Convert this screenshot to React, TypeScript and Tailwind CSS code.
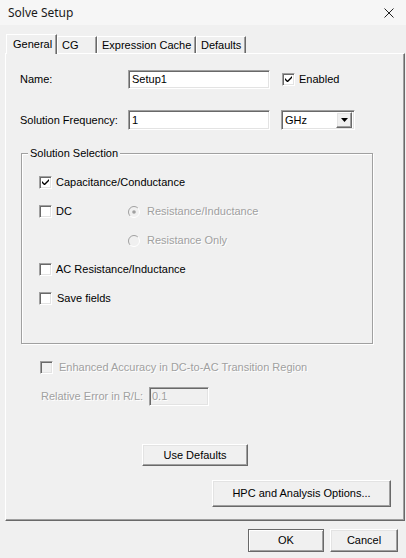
import type { ReactNode } from 'react'

const sunken =
  'border border-t-[#a0a0a0] border-l-[#a0a0a0] border-r-white border-b-white shadow-[inset_1px_1px_0_#696969,inset_-1px_-1px_0_#e3e3e3]'
const raised =
  'border border-t-white border-l-white border-r-[#696969] border-b-[#696969] shadow-[inset_-1px_-1px_0_#a0a0a0,inset_1px_1px_0_#e3e3e3] bg-[#f0f0f0]'
const dim = 'text-[#a0a0a0] [text-shadow:1px_1px_0_#fff]'

function Check({ checked = false, disabled = false }: { checked?: boolean; disabled?: boolean }) {
  return (
    <span className={`flex h-[13px] w-[13px] shrink-0 items-center justify-center ${sunken} ${disabled ? 'bg-[#f0f0f0]' : 'bg-white'}`}>
      {checked && (
        <svg width="7" height="7" viewBox="0 0 7 7">
          <path d="M0 2 L0 4 L2 6 L3 6 L7 2 L7 0 L2.5 4.5 Z" fill="#000" />
        </svg>
      )}
    </span>
  )
}

function Radio({ checked = false }: { checked?: boolean }) {
  return (
    <svg width="12" height="12" viewBox="0 0 12 12" className="shrink-0">
      <circle cx="6" cy="6" r="5.5" fill="#f0f0f0" />
      <path d="M2.1 9.9 A5.5 5.5 0 0 1 9.9 2.1" stroke="#a0a0a0" strokeWidth="1" fill="none" />
      <path d="M9.9 2.1 A5.5 5.5 0 0 1 2.1 9.9" stroke="#ffffff" strokeWidth="1" fill="none" />
      {checked && <circle cx="6" cy="6" r="1.8" fill="#a0a0a0" />}
    </svg>
  )
}

function Button({ children, className = '' }: { children: ReactNode; className?: string }) {
  return <div className={`flex shrink-0 items-center justify-center ${raised} ${className}`}>{children}</div>
}

function Row({ children, className = '' }: { children: ReactNode; className?: string }) {
  return <div className={`flex h-[17px] items-center whitespace-nowrap ${className}`}>{children}</div>
}

export default function App() {
  const tabs = [
    { label: 'CG', w: 'w-[40px]' },
    { label: 'Expression Cache', w: 'w-[99px]' },
    { label: 'Defaults', w: 'w-[50px]' },
  ]

  return (
    <div className="flex h-[558px] w-[406px] flex-col bg-[#f0f0f0] [font-family:'Liberation_Sans',Arial,sans-serif] text-[11px] leading-[13px] text-black">
      {/* title bar */}
      <div className="flex h-[25px] items-center justify-between bg-[#f6f6f6] pl-[8px] pr-[12px]">
        <span className="[font-family:'Noto_Sans',sans-serif] text-[12px] text-[#1a1a1a]">Solve Setup</span>
        <svg width="10" height="10" viewBox="0 0 10 10">
          <path d="M0.5 0.5 L9.5 9.5 M9.5 0.5 L0.5 9.5" stroke="#222" strokeWidth="1" />
        </svg>
      </div>

      {/* tab strip */}
      <div className="ml-[6px] mt-[9px] flex h-[19px] items-end whitespace-nowrap">
        <div className="relative z-10 -mb-px flex h-[20px] w-[51px] items-start border border-b-0 border-t-white border-l-white border-r-[#696969] bg-[#f0f0f0] pl-[6px] pt-[3px] shadow-[inset_-1px_0_0_#a0a0a0]">
          General
        </div>
        {tabs.map((t) => (
          <div
            key={t.label}
            className={`flex h-[17px] ${t.w} items-start border border-b-0 border-t-white border-l-white border-r-[#696969] pl-[4px] pt-[2px] shadow-[inset_-1px_0_0_#a0a0a0]`}
          >
            {t.label}
          </div>
        ))}
      </div>

      {/* tab panel */}
      <div className="ml-[5px] flex h-[468px] w-[400px] flex-col border border-t-white border-l-white border-r-[#696969] border-b-[#696969] pl-[14px] shadow-[inset_-1px_-1px_0_#a0a0a0]">
        <div className="mt-[16px] flex h-[19px] items-center">
          <span className="w-[108px]">Name:</span>
          <div className={`flex h-[19px] w-[142px] items-center bg-white pl-[3px] ${sunken}`}>Setup1</div>
          <span className="ml-[12px] mr-[4px]">
            <Check checked />
          </span>
          <span>Enabled</span>
        </div>

        <div className="mt-[21px] flex h-[20px] items-center">
          <span className="w-[108px] whitespace-nowrap">Solution Frequency:</span>
          <div className={`flex h-[20px] w-[142px] items-center bg-white pl-[3px] ${sunken}`}>1</div>
          <div className={`ml-[11px] flex h-[20px] w-[74px] items-center justify-between bg-white pl-[3px] pr-[2px] ${sunken}`}>
            <span>GHz</span>
            <div className={`flex h-[16px] w-[16px] items-center justify-center ${raised}`}>
              <svg width="7" height="4" viewBox="0 0 7 4">
                <path d="M0 0 L7 0 L3.5 4 Z" fill="#000" />
              </svg>
            </div>
          </div>
        </div>

        {/* group box */}
        <div className="relative ml-[1px] mt-[23px] flex h-[191px] w-[352px] flex-col border border-[#a0a0a0] pl-[17px] pt-[20px] shadow-[inset_1px_1px_0_#fff,1px_1px_0_#fff]">
          <span className="absolute -top-[7px] left-[6px] bg-[#f0f0f0] px-[2px]">Solution Selection</span>
          <div className="flex flex-col gap-[12px]">
            <Row>
              <Check checked />
              <span className="ml-[4px]">Capacitance/Conductance</span>
            </Row>
            <Row>
              <Check />
              <span className="ml-[4px] w-[72px]">DC</span>
              <Radio checked />
              <span className={`ml-[7px] ${dim}`}>Resistance/Inductance</span>
            </Row>
            <Row>
              <span className="w-[89px]" />
              <Radio />
              <span className={`ml-[7px] ${dim}`}>Resistance Only</span>
            </Row>
            <Row>
              <Check />
              <span className="ml-[4px]">AC Resistance/Inductance</span>
            </Row>
            <Row>
              <Check />
              <span className="ml-[5px]">Save fields</span>
            </Row>
          </div>
        </div>

        <Row className="ml-[20px] mt-[15px]">
          <Check disabled />
          <span className={`ml-[6px] ${dim}`}>Enhanced Accuracy in DC-to-AC Transition Region</span>
        </Row>

        <div className="ml-[21px] mt-[11px] flex h-[19px] items-center whitespace-nowrap">
          <span className={`w-[108px] shrink-0 ${dim}`}>Relative Error in R/L:</span>
          <div className={`flex h-[19px] w-[60px] items-center bg-[#f0f0f0] pl-[2px] ${sunken} ${dim}`}>0.1</div>
        </div>

        <Button className="ml-[122px] mt-[38px] h-[22px] w-[106px]">Use Defaults</Button>
        <Button className="ml-[192px] mt-[14px] h-[27px] w-[179px]">HPC and Analysis Options...</Button>
      </div>

      {/* footer */}
      <div className="mt-[8px] flex justify-end gap-[6px] pr-[8px]">
        <div className="flex h-[23px] w-[76px] items-center justify-center border border-[#696969] bg-[#f0f0f0] shadow-[inset_1px_1px_0_#fff,inset_-1px_-1px_0_#a0a0a0]">
          OK
        </div>
        <Button className="h-[23px] w-[68px]">Cancel</Button>
      </div>
    </div>
  )
}
